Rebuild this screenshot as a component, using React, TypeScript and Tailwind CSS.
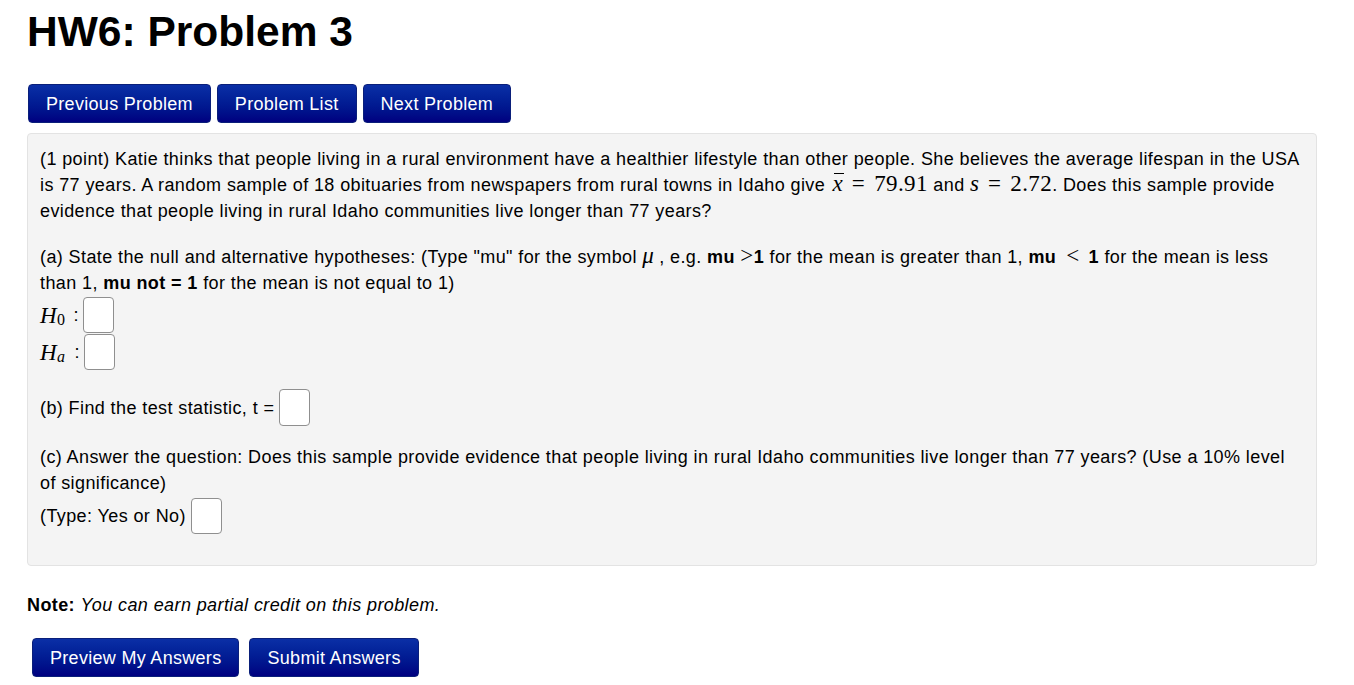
const sans = "font-['Liberation_Sans',Arial,sans-serif]";
const serifTimes = "font-['Liberation_Serif','Times_New_Roman',serif]";

function NavButton({ label }: { label: string }) {
  return (
    <button
      type="button"
      className="h-[39px] px-[17px] rounded-[4px] border border-[#0a1f7a] bg-gradient-to-b from-[#0b2fa6] to-[#000080] text-white text-[18px] tracking-[0.3px] leading-none"
    >
      {label}
    </button>
  );
}

function AnswerBox({ h = 'h-[36px]' }: { h?: string }) {
  return <span className={`inline-block w-[31px] ${h} rounded-[4px] border border-[#8f8f8f] bg-white align-middle`} />;
}

function Mi({ children }: { children: React.ReactNode }) {
  return <span className={`${serifTimes} italic text-[23px] leading-none tracking-normal`}>{children}</span>;
}

function Mn({ children }: { children: React.ReactNode }) {
  return <span className={`${serifTimes} text-[23px] leading-none tracking-[0.4px]`}>{children}</span>;
}

function Eq() {
  return <span className={`${serifTimes} text-[23px] leading-none mx-[9px]`}>=</span>;
}

export default function App() {
  return (
    <div className={`${sans} text-black bg-white min-h-[685px] px-[27px]`}>
      <h1 className="pt-[8px] text-[42.5px] font-bold leading-[47px]">HW6: Problem 3</h1>

      <div className="mt-[29px] flex gap-[6px] pl-[1px]">
        <NavButton label="Previous Problem" />
        <NavButton label="Problem List" />
        <NavButton label="Next Problem" />
      </div>

      <div className="mt-[10px] w-[1290px] rounded-[4px] border border-[#e3e3e3] bg-[#f4f4f4] px-[12px] pt-[12px] pb-[31px] text-[18px] leading-[26px] tracking-[0.4px]">
        <p>
          (1 point) Katie thinks that people living in a rural environment have a healthier lifestyle than other people. She believes the average lifespan in the USA is 77 years. A random sample of 18 obituaries from newspapers from rural towns in Idaho give{' '}
          <Mi>
            <span className="relative inline-block ml-[2px]">
              x
              <span className="absolute left-[1px] top-[1px] h-[1px] w-[10px] bg-black" />
            </span>
          </Mi>
          <Eq />
          <Mn>79.91</Mn> and <Mi>s</Mi>
          <Eq />
          <Mn>2.72</Mn>. Does this sample provide evidence that people living in rural Idaho communities live longer than 77 years?
        </p>

        <p className="mt-[20px]">
          (a) State the null and alternative hypotheses: (Type "mu" for the symbol <Mi>μ</Mi> , e.g. <b>mu</b>{' '}
          <span className={`${serifTimes} text-[23px] leading-none`}>&gt;</span>
          <b>1</b> for the mean is greater than 1, <b>mu</b>
          <span className={`${serifTimes} text-[23px] leading-none ml-[10px] mr-[9px]`}>&lt;</span>
          <b>1</b> for the mean is less than 1, <b>mu not = 1</b> for the mean is not equal to 1)
        </p>
        <div className="mt-[1px] flex h-[36px] items-center">
          <span className={`${serifTimes} italic text-[23px] leading-none`}>H</span>
          <span className={`${serifTimes} text-[16px] leading-none mt-[10px]`}>0</span>
          <span className="ml-[8px] mr-[4px]">:</span>
          <AnswerBox />
        </div>
        <div className="mt-[1px] flex h-[36px] items-center">
          <span className={`${serifTimes} italic text-[23px] leading-none`}>H</span>
          <span className={`${serifTimes} italic text-[16px] leading-none mt-[10px]`}>a</span>
          <span className="ml-[9px] mr-[4px]">:</span>
          <AnswerBox />
        </div>

        <div className="mt-[19px] flex h-[37px] items-center">
          <span>(b) Find the test statistic, t =</span>
          <span className="ml-[5px]">
            <AnswerBox h="h-[37px]" />
          </span>
        </div>

        <p className="mt-[18px]">
          (c) Answer the question: Does this sample provide evidence that people living in rural Idaho communities live longer than 77 years? (Use a 10% level of significance)
        </p>
        <div className="mt-[2px] flex h-[36px] items-center">
          <span>(Type: Yes or No)</span>
          <span className="ml-[5px]">
            <AnswerBox />
          </span>
        </div>
      </div>

      <p className="mt-[26px] text-[18px] leading-[26px] tracking-[0.4px]">
        <b>Note:</b> <i>You can earn partial credit on this problem.</i>
      </p>

      <div className="mt-[20px] ml-[5px] flex gap-[10px]">
        <NavButton label="Preview My Answers" />
        <NavButton label="Submit Answers" />
      </div>
    </div>
  );
}
